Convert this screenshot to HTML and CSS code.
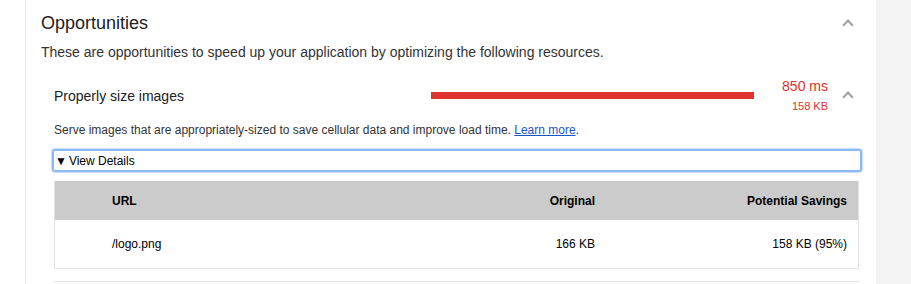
FILE: index.html
```html
<!DOCTYPE html>
<html>
<head>
<meta charset="utf-8">
<link rel="stylesheet" href="styles.css">
</head>
<body>
<div class="page">
  <div class="gutter"></div>
  <main class="main">
    <div class="group-header">
      <h2 class="group-title">Opportunities</h2>
      <span class="chevron"></span>
    </div>
    <p class="group-desc">These are opportunities to speed up your application by optimizing the following resources.</p>
    <section class="audit">
      <div class="audit-header">
        <span class="audit-title">Properly size images</span>
        <div class="bar"></div>
        <div class="metric">
          <span class="metric-ms">850 ms</span>
          <span class="metric-kb">158 KB</span>
        </div>
        <span class="chevron"></span>
      </div>
      <p class="audit-desc">Serve images that are appropriately-sized to save cellular data and improve load time. <a href="#">Learn more</a>.</p>
      <div class="details-summary"><span class="triangle">▼</span> View Details</div>
      <div class="table">
        <div class="row head">
          <div class="cell"></div>
          <div class="cell">URL</div>
          <div class="cell num">Original</div>
          <div class="cell num">Potential Savings</div>
        </div>
        <div class="row body">
          <div class="cell"></div>
          <div class="cell">/logo.png</div>
          <div class="cell num">166 KB</div>
          <div class="cell num">158 KB (95%)</div>
        </div>
      </div>
    </section>
    <div class="next-audit"></div>
  </main>
  <div class="side"></div>
</div>
</body>
</html>
```
FILE: styles.css
```css
* { box-sizing: border-box; }
html, body { margin: 0; padding: 0; background: #fff; }
body { font-family: "Liberation Sans", Arial, sans-serif; color: #212121; }
.page { display: flex; width: 911px; height: 284px; overflow: hidden; }
.gutter { width: 25px; flex: none; }
.main { flex: 1; border-left: 1px solid #e8e8e8; padding: 0 17px 0 15px; }
.side { width: 35px; flex: none; background: #f3f3f3; }

.group-header { height: 44px; padding-top: 3px; display: flex; align-items: center; justify-content: space-between; }
.group-title { margin: 0; font-size: 18px; font-weight: normal; color: #212121; }
.chevron { width: 14px; height: 14px; position: relative; flex: none; margin-right: 4px; }
.chevron::before { content: ""; position: absolute; left: 3px; top: 4px; width: 6px; height: 6px; border-left: 2px solid #a0a0a0; border-top: 2px solid #a0a0a0; transform: rotate(45deg); }
.group-desc { margin: 0; font-size: 14px; line-height: 16px; color: #333; }

.audit { padding-left: 13px; }
.audit-header { height: 48px; margin-top: 12px; display: flex; align-items: center; }
.audit-title { font-size: 14px; flex: 1; }
.bar { width: 323px; height: 7px; background: #df332f; margin-top: -1px; }
.metric { width: 74px; display: flex; flex-direction: column; align-items: flex-end; gap: 2px; color: #df332f; }
.metric-ms { font-size: 14px; line-height: 18px; }
.metric-kb { font-size: 11px; line-height: 18px; }
.audit-header .chevron { margin-left: 13px; }
.audit-desc { margin: 2px 0 0; font-size: 12px; line-height: 16px; color: #333; }
.audit-desc a { color: #1a55c5; }
.details-summary { margin: 11px -3px 0 -2px; height: 23px; border: 2px solid #8cbaf8; border-radius: 3px; box-shadow: 0 0 1px 1px #c5dcfc; font-size: 12px; display: flex; align-items: center; padding-left: 1px; color: #000; }
.triangle { font-size: 12px; margin-right: 2px; }
.table { margin: 9px 0 0 0; border: 1px solid #e4e4e4; border-top: none; font-size: 12px; color: #000; }
.row { display: grid; grid-template-columns: 57px 1fr 140px 252px; align-items: center; }
.row.head { height: 39px; background: #cbcbcb; font-weight: bold; }
.row.body { height: 48px; }
.num { text-align: right; padding-right: 11px; }
.next-audit { margin: 12px 0 0 13px; border-top: 1px solid #e4e4e4; }
```
